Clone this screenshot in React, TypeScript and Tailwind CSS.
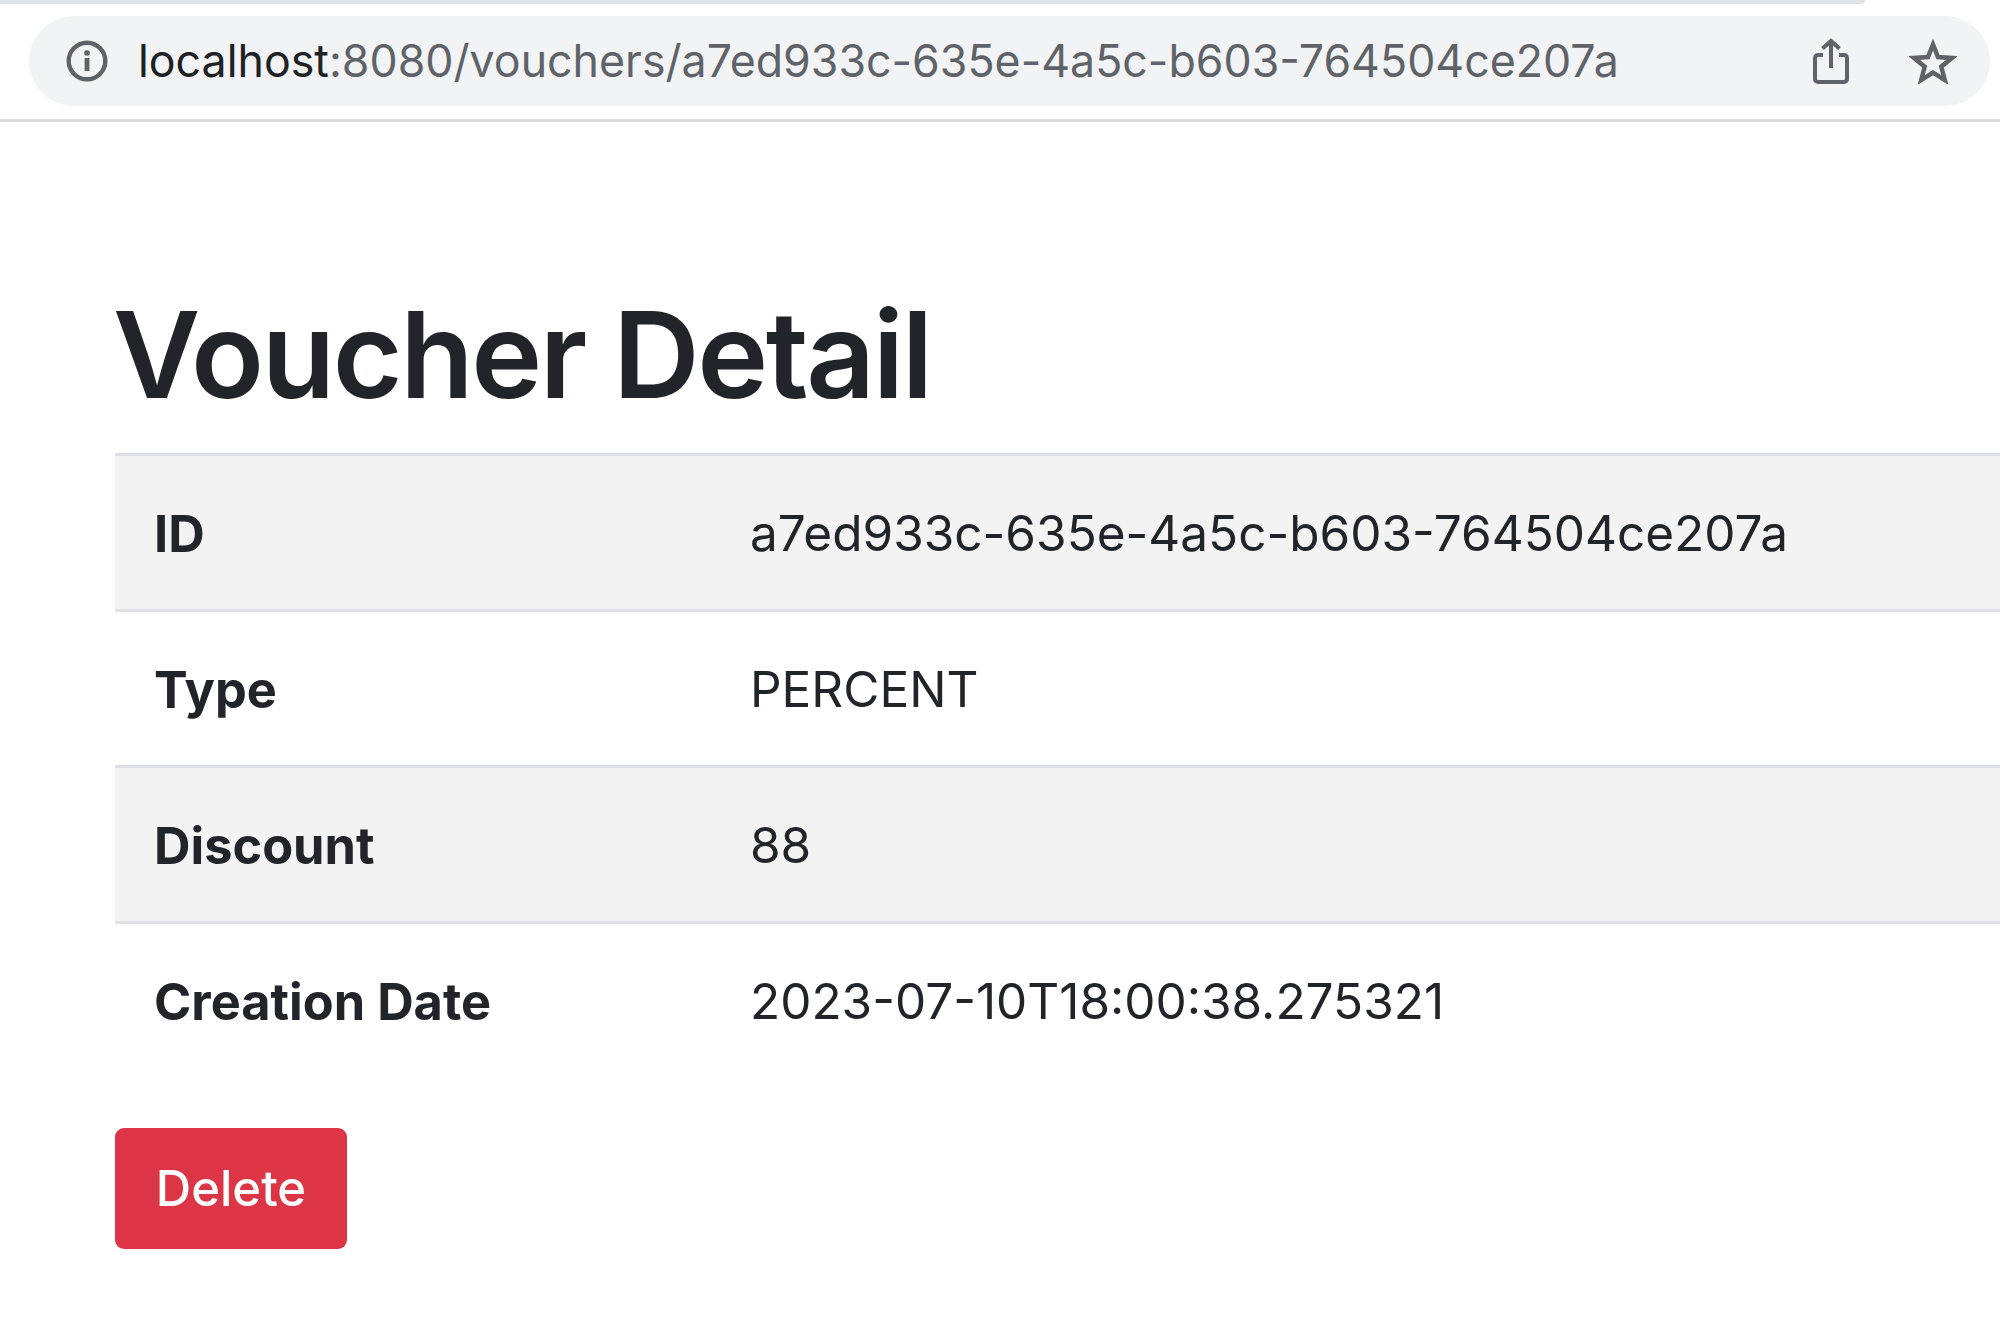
const sans = 'font-[Inter,"Liberation_Sans",sans-serif]';

const rows = [
  { label: 'ID', value: 'a7ed933c-635e-4a5c-b603-764504ce207a' },
  { label: 'Type', value: 'PERCENT' },
  { label: 'Discount', value: '88' },
  { label: 'Creation Date', value: '2023-07-10T18:00:38.275321' },
];

function InfoIcon() {
  return (
    <svg viewBox="0 0 42 42" className="h-[42px] w-[42px] shrink-0" fill="none" stroke="#5f6368">
      <circle cx="21" cy="21" r="18.300" strokeWidth="4.400" />
      <circle cx="21" cy="13" r="2.800" fill="#5f6368" stroke="none" />
      <path d="M21 18v13" strokeWidth="4.800" />
    </svg>
  );
}

function ShareIcon() {
  return (
    <svg viewBox="0 0 36 48" className="h-[48px] w-[36px]" fill="none" stroke="#5f6368" strokeWidth="4">
      <path d="M10 18H5a3 3 0 0 0-3 3v21a3 3 0 0 0 3 3h26a3 3 0 0 0 3-3V21a3 3 0 0 0-3-3h-5" />
      <path d="M18 31V4M9.500 11.500 18 4l8.500 7.500" />
    </svg>
  );
}

function StarIcon() {
  return (
    <svg viewBox="0 0 48 46" className="h-[46px] w-[48px]" fill="none" stroke="#5f6368" strokeWidth="4.500" strokeLinejoin="miter">
      <path d="M24 6.500 29 19 43 20 32.300 28.700 35.800 42 24 34.600 12.200 42 15.700 28.700 5 20 19 19Z" />
    </svg>
  );
}

export default function App() {
  return (
    <div className={`h-[1325px] w-[2000px] overflow-hidden bg-white text-[#212529] ${sans}`}>
      <div className="h-[4px] w-[1865px] rounded-br-[6px] bg-[#dfe1e9]" />
      <div className="h-[118px] border-b-[3px] border-[#dcdcdc] pl-[29px] pr-[10px] pt-[12px]">
        <div className="flex h-[90px] items-center rounded-full bg-[#f1f3f4] pl-[37px] pr-[33px]">
          <InfoIcon />
          <div className="ml-[30px] flex-1 whitespace-nowrap text-[44.700px] leading-none text-[#5f6368]">
            <span className="text-[#202124]">localhost</span>:8080/vouchers/a7ed933c-635e-4a5c-b603-764504ce207a
          </div>
          <ShareIcon />
          <div className="ml-[60px]">
            <StarIcon />
          </div>
        </div>
      </div>

      <div className="pl-[115px] pt-[161px]">
        <h1 className="-ml-[2px] pb-[26px] text-[120px] font-semibold leading-[1.2] tracking-[-0.02em]">Voucher Detail</h1>
        {rows.map((row, i) => (
          <div
            key={row.label}
            className={
              'flex h-[156px] items-center border-t-[3px] border-[#dee2e6] pt-[2px] text-[49.500px] ' +
              (i % 2 === 0 ? 'bg-[#f3f3f3]' : 'bg-white')
            }
          >
            <div className="w-[635px] pl-[39px] text-[50.500px] font-bold">{row.label}</div>
            <div>{row.value}</div>
          </div>
        ))}
        <button className="mt-[51px] h-[121px] w-[232px] rounded-[9px] bg-[#dc3545] text-[49px] font-medium text-white">
          Delete
        </button>
      </div>
    </div>
  );
}
